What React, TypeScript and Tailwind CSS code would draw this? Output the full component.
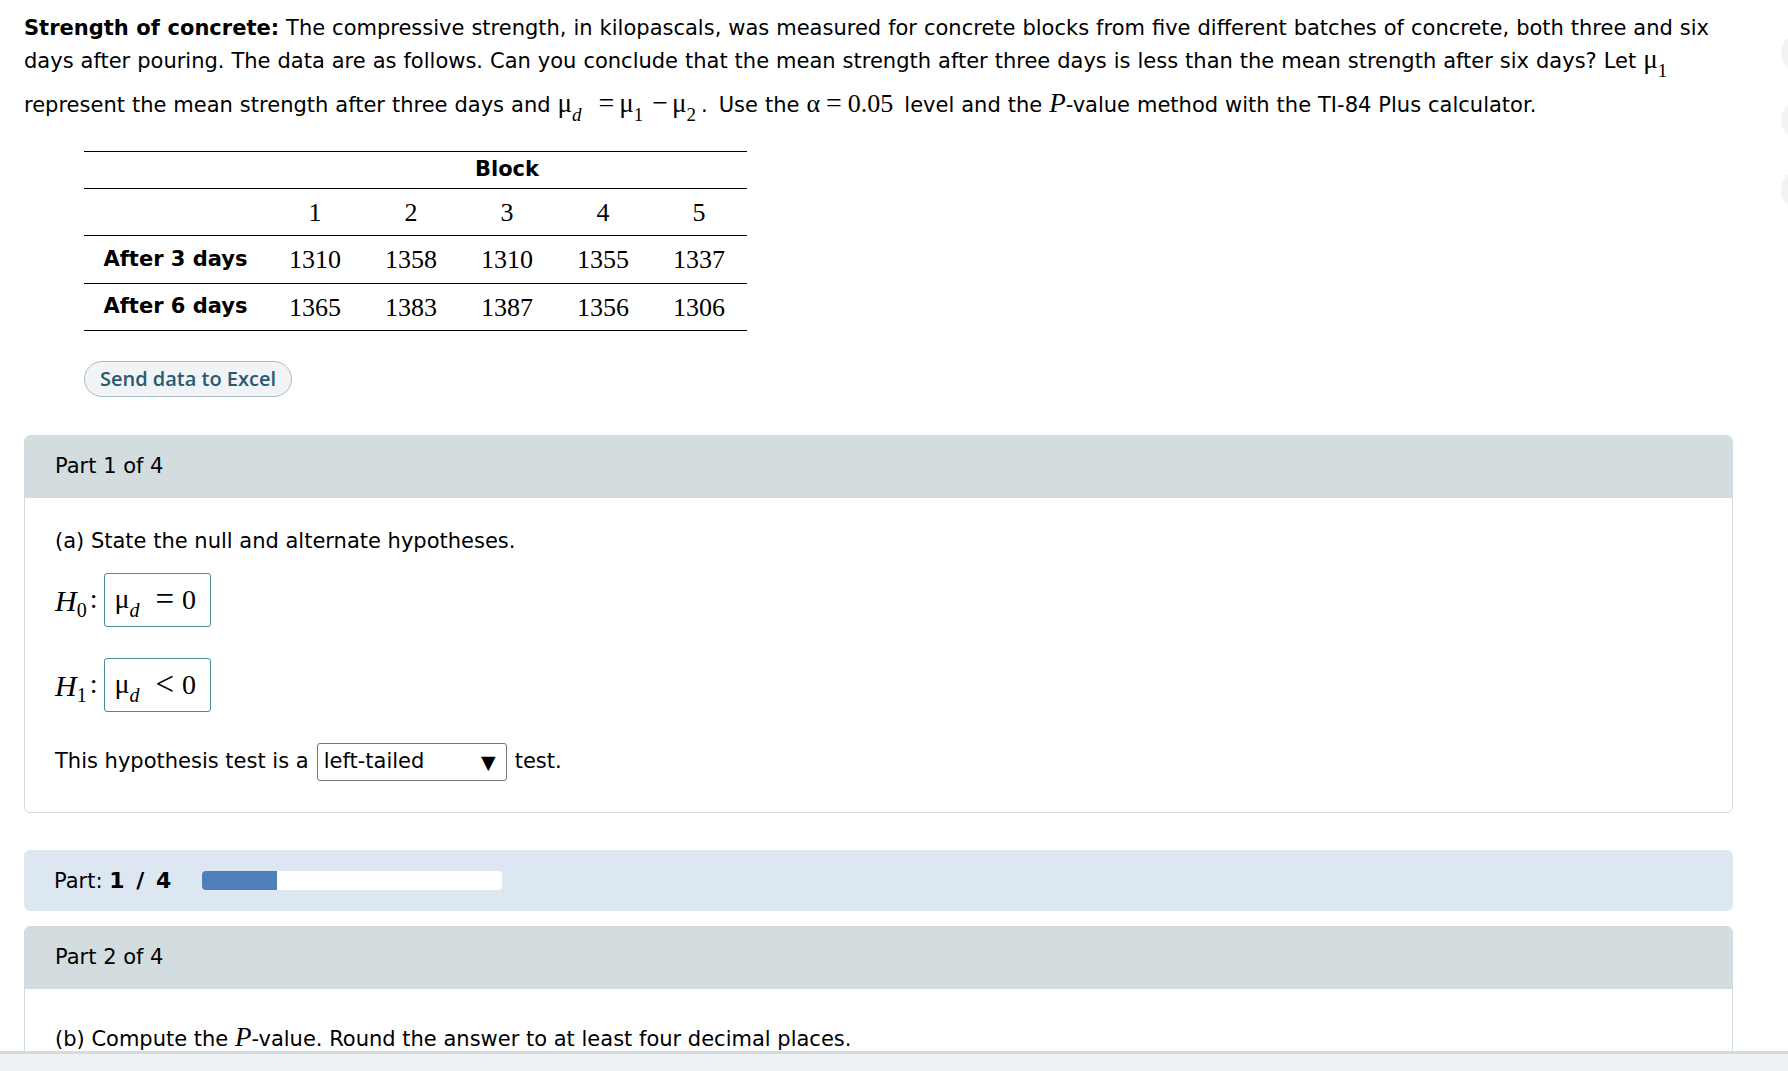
import React from 'react';

const sans = "[font-family:'DejaVu_Sans',Verdana,sans-serif]";
const serif = "[font-family:'Liberation_Serif','Times_New_Roman',serif]";

function Sub({ children, italic }: { children: React.ReactNode; italic?: boolean }) {
  return (
    <span className={`relative top-[9px] text-[19px] ${italic ? 'italic' : ''}`}>{children}</span>
  );
}

function Mu({ sub, italic }: { sub: string; italic?: boolean }) {
  return (
    <span className={`${serif} text-[27px]`}>
      μ<Sub italic={italic}>{sub}</Sub>
    </span>
  );
}

const blocks = [1, 2, 3, 4, 5];
const after3 = [1310, 1358, 1310, 1355, 1337];
const after6 = [1365, 1383, 1387, 1356, 1306];

function DataTable() {
  return (
    <table className="w-[663px] border-collapse">
      <tbody>
        <tr className="h-[37px] border-t border-b border-black">
          <td className="w-[183px]" />
          <td colSpan={5} className="text-center font-bold text-[21px]">
            Block
          </td>
        </tr>
        <tr className="h-[47px] border-b border-black">
          <td />
          {blocks.map((b) => (
            <td key={b} className={`w-[96px] text-center ${serif} text-[26px]`}>
              {b}
            </td>
          ))}
        </tr>
        <tr className="h-[48px] border-b border-black">
          <td className="text-center font-bold text-[21px]">After 3 days</td>
          {after3.map((v, i) => (
            <td key={i} className={`text-center ${serif} text-[26px]`}>
              {v}
            </td>
          ))}
        </tr>
        <tr className="h-[47px] border-b border-black">
          <td className="text-center font-bold text-[21px]">After 6 days</td>
          {after6.map((v, i) => (
            <td key={i} className={`text-center ${serif} text-[26px]`}>
              {v}
            </td>
          ))}
        </tr>
      </tbody>
    </table>
  );
}

function HypBox({ h, rel }: { h: string; rel: string }) {
  return (
    <div className="flex items-center">
      <span className={`${serif} italic text-[30px]`}>H</span>
      <span className={`${serif} text-[20px] relative top-[10px]`}>{h}</span>
      <span className={`${serif} text-[28px] ml-[3px] mr-[7px] relative -top-[1px]`}>:</span>
      <div className="w-[107px] h-[54px] border-[1.5px] border-[#4b8a9c] rounded-[3px] flex items-center pl-[9px]">
        <span className={`${serif} text-[28px] relative -top-[1px]`}>
          μ<span className="relative top-[9px] text-[20px] italic">d</span>
        </span>
        <span className={`${serif} text-[33px] leading-none ml-[16px] relative -top-[1px]`}>{rel}</span>
        <span className={`${serif} text-[28px] ml-[8px]`}>0</span>
      </div>
    </div>
  );
}

export default function App() {
  return (
    <div className={`relative w-[1788px] h-[1071px] overflow-hidden bg-white text-black ${sans}`}>
      <div className="pl-[24px] w-[1733px]">
        {/* Question text */}
        <div className="pt-[13px] text-[21px] [word-spacing:0.3px]">
          <div className="leading-[31px] whitespace-nowrap">
            <b>Strength of concrete:</b> The compressive strength, in kilopascals, was measured for concrete blocks from
            five different batches of concrete, both three and six
          </div>
          <div className="leading-[31px] whitespace-nowrap">
            days after pouring. The data are as follows. Can you conclude that the mean strength after three days is
            less than the mean strength after six days? Let <Mu sub="1" />
          </div>
          <div className="mt-[10px] leading-[31px] whitespace-nowrap">
            represent the mean strength after three days and <Mu sub="d" italic />
            <span className={`${serif} text-[28px] ml-[17px] mr-[5px]`}>=</span>
            <Mu sub="1" />
            <span className={`${serif} text-[28px] ml-[9px] mr-[4px]`}>−</span>
            <Mu sub="2" />
            <span className="ml-[5px] mr-[4px]">.</span> Use the{' '}
            <span className={`${serif} text-[26px] mr-[4px]`}>
              α<span className="text-[28px] px-[6px]">=</span>0.05
            </span>{' '}
            level and the <span className={`${serif} italic text-[27px]`}>P</span>-value method with the TI-84 Plus
            calculator.
          </div>
        </div>

        {/* Data table */}
        <div className="mt-[30px] ml-[60px]">
          <DataTable />
          <button className="mt-[30px] h-[36px] w-[208px] rounded-full border border-[#a8bcc6] bg-[#f1f4f6] text-[#2b5970] text-[20px] font-semibold [font-family:'Open_Sans',sans-serif]">
            Send data to Excel
          </button>
        </div>

        {/* Part 1 */}
        <div className="mt-[38px] border border-[#d3dbde] rounded-[6px] overflow-hidden">
          <div className="h-[62px] bg-[#d3dcdf] flex items-center pl-[30px] text-[21px]">Part 1 of 4</div>
          <div className="pl-[30px] pt-[28px] pb-[31px] text-[21px]">
            <div className="leading-[30px]">(a) State the null and alternate hypotheses.</div>
            <div className="mt-[17px]">
              <HypBox h="0" rel="=" />
            </div>
            <div className="mt-[31px]">
              <HypBox h="1" rel="<" />
            </div>
            <div className="mt-[31px] flex items-center gap-[8px]">
              <span>This hypothesis test is a</span>
              <div className="w-[190px] h-[38px] border border-[#767676] rounded-[3px] flex items-center justify-between pl-[6px] pr-[10px]">
                <span>left-tailed</span>
                <span className="text-[19px]">▼</span>
              </div>
              <span>test.</span>
            </div>
          </div>
        </div>

        {/* Progress */}
        <div className="mt-[37px] h-[61px] bg-[#dce7f2] rounded-[6px] flex items-center pl-[30px] text-[21px]">
          <span>
            Part: <b className="text-[22px] [word-spacing:4px]">1 / 4</b>
          </span>
          <div className="ml-[31px] w-[300px] h-[19px] bg-white rounded-[4px] overflow-hidden">
            <div className="h-full bg-[#4e7fba]" style={{ width: '25%' }} />
          </div>
        </div>

        {/* Part 2 */}
        <div className="mt-[15px] border border-[#d3dbde] rounded-[6px] overflow-hidden">
          <div className="h-[62px] bg-[#d3dcdf] flex items-center pl-[30px] text-[21px]">Part 2 of 4</div>
          <div className="pl-[30px] pt-[33px] pb-[40px] text-[21px]">
            <div className="leading-[30px]">
              (b) Compute the <span className={`${serif} italic text-[27px]`}>P</span>-value. Round the answer to at
              least four decimal places.
            </div>
          </div>
        </div>
      </div>

      {/* side floating buttons, mostly off screen */}
      <div className="absolute left-[1781px] top-[33px] w-[40px] h-[40px] rounded-full bg-[#f2f3f5]" />
      <div className="absolute left-[1781px] top-[100px] w-[40px] h-[40px] rounded-full bg-[#f2f3f5]" />
      <div className="absolute left-[1781px] top-[170px] w-[40px] h-[40px] rounded-full bg-[#f2f3f5]" />

      {/* bottom bar */}
      <div className="absolute left-0 right-0 bottom-0 h-[20px] border-t-[3px] border-[#d3dbdf] bg-[#eef2f4]" />
    </div>
  );
}
